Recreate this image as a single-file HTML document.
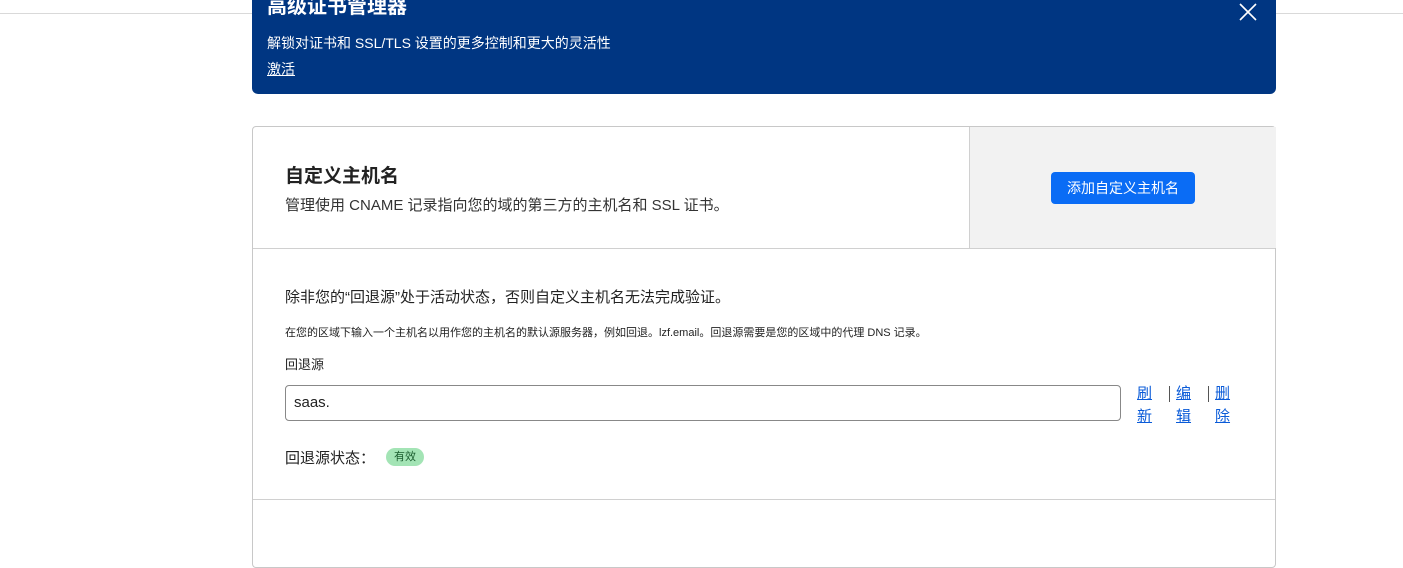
<!DOCTYPE html>
<html><head><meta charset="utf-8"><style>
body{margin:0;width:1403px;height:532px;overflow:hidden;background:#fff;font-family:"Liberation Sans","Noto Sans CJK SC",sans-serif;position:relative;color:#222}
.topline{position:absolute;left:0;top:13px;width:1403px;height:1px;background:#d9d9d9}
.banner{position:absolute;left:252px;top:0;width:1024px;height:94px;background:#003682;border-radius:0 0 6px 6px;color:#fff;overflow:hidden}
.banner .t{position:absolute;left:15px;top:-10px;font-size:20px;font-weight:bold}
.banner .s{position:absolute;left:15px;top:33px;font-size:14px}
.banner .a{position:absolute;left:15px;top:59px;font-size:14px;text-decoration:underline}
.banner svg{position:absolute;left:986px;top:2px}
.card{position:absolute;left:252px;top:126px;width:1022px;height:440px;border:1px solid #c8c8c8;border-radius:4px}
.right{position:absolute;left:716px;top:0;width:306px;height:121px;background:#f2f2f2;border-left:1px solid #d0d0d0}
.btn{position:absolute;left:81px;top:45px;width:144px;height:32px;background:#0a6cf5;border-radius:4px;color:#fff;font-size:14px;line-height:32px;text-align:center}
.h{position:absolute;left:32px;top:34px;font-size:19px;font-weight:bold}
.d{position:absolute;left:32px;top:67px;font-size:15px;color:#333}
.div1{position:absolute;left:0;top:121px;width:1022px;height:1px;background:#d0d0d0}
.div2{position:absolute;left:0;top:372px;width:1022px;height:1px;background:#d0d0d0}
.p1{position:absolute;left:32px;top:159px;font-size:15px}
.p2{position:absolute;left:32px;top:197px;font-size:11px}
.p3{position:absolute;left:32px;top:227px;font-size:13px}
.inp{box-sizing:border-box;position:absolute;left:32px;top:258px;width:836px;height:36px;border:1px solid #888;border-radius:4px;font-size:15px;line-height:34px;padding-left:8px}
.lk{position:absolute;top:255px;font-size:15px;color:#0a5bd8;line-height:23px;text-decoration:underline;width:16px}
.bar{position:absolute;top:259px;width:1px;height:16px;background:#555}
.st{position:absolute;left:32px;top:320px;font-size:15px}
.badge{position:absolute;left:133px;top:321px;background:#a3e4b5;color:#1a5c2e;font-size:11px;border-radius:9px;padding:1px 8px;line-height:16px}
</style></head><body>
<div class="topline"></div>
<div class="banner"><div class="t">高级证书管理器</div><div class="s">解锁对证书和 SSL/TLS 设置的更多控制和更大的灵活性</div><div class="a">激活</div><svg width="20" height="20" viewBox="0 0 20 20"><path d="M2 2L18 18M18 2L2 18" stroke="#fff" stroke-width="1.6"/></svg></div>
<div class="card">
<div class="h">自定义主机名</div>
<div class="d">管理使用 CNAME 记录指向您的域的第三方的主机名和 SSL 证书。</div>
<div class="right"><div class="btn">添加自定义主机名</div></div>
<div class="div1"></div>
<div class="p1">除非您的“回退源”处于活动状态，否则自定义主机名无法完成验证。</div>
<div class="p2">在您的区域下输入一个主机名以用作您的主机名的默认源服务器，例如回退。lzf.email。回退源需要是您的区域中的代理 DNS 记录。</div>
<div class="p3">回退源</div>
<div class="inp">saas.</div>
<div class="lk" style="left:884px">刷新</div>
<div class="bar" style="left:916px"></div><div class="lk" style="left:923px">编辑</div>
<div class="bar" style="left:955px"></div><div class="lk" style="left:962px">删除</div>
<div class="st">回退源状态：</div><div class="badge">有效</div>
<div class="div2"></div>
</div>
</body></html>
